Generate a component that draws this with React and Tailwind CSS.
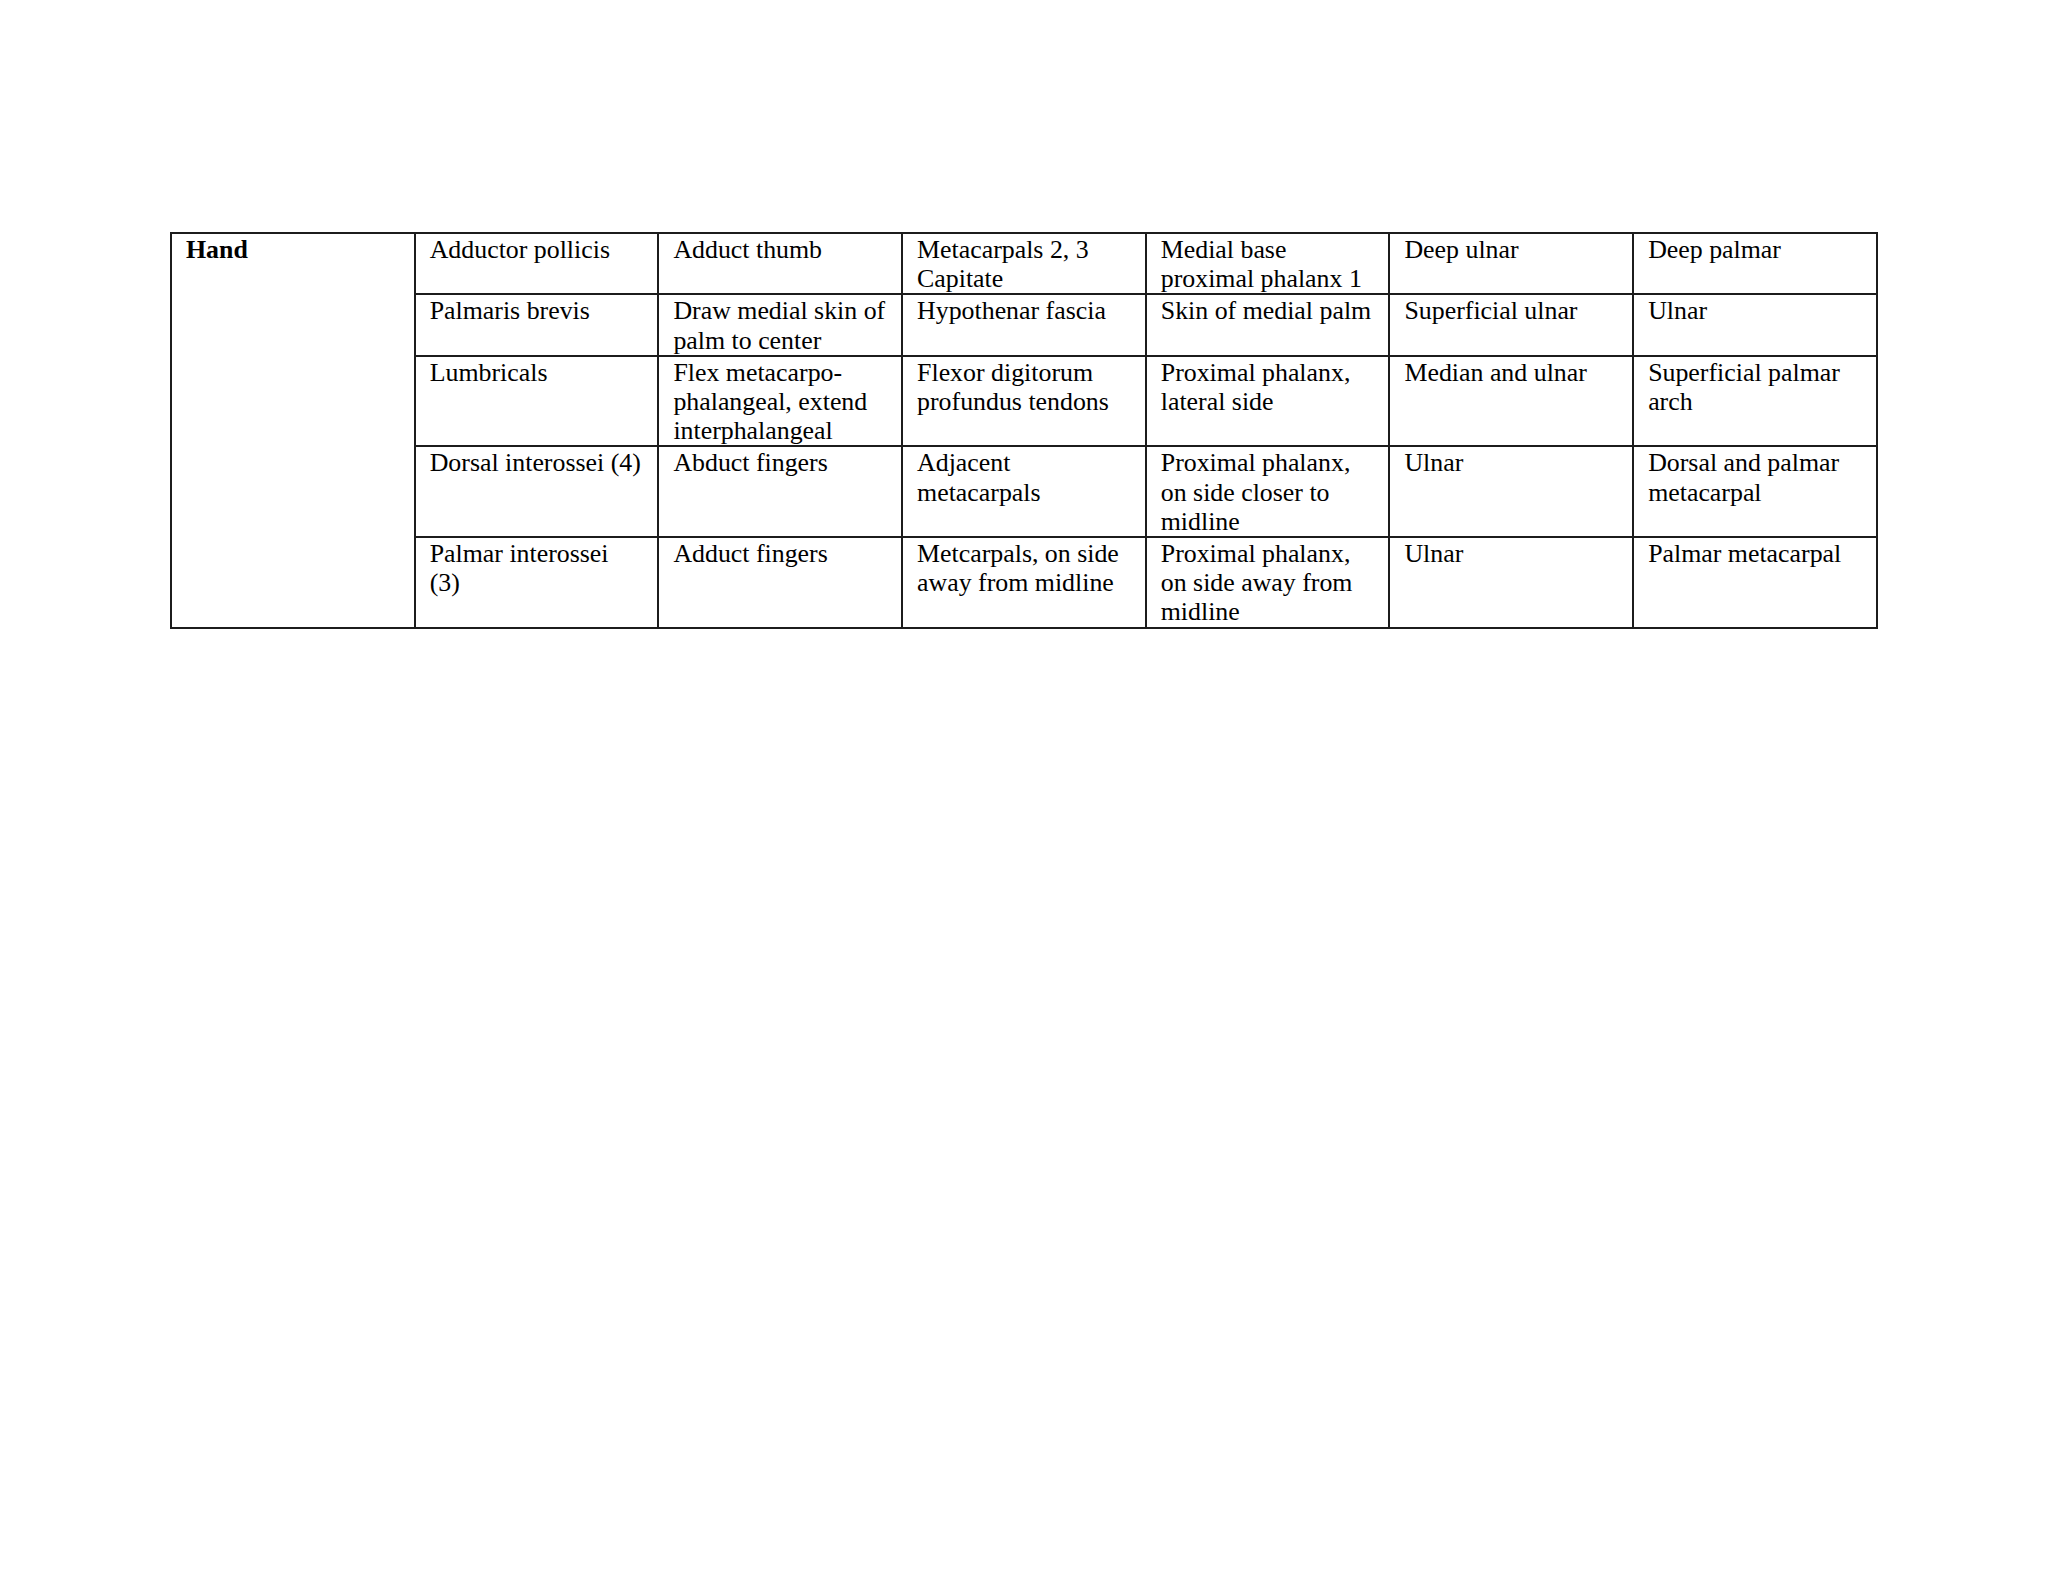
import React from "react";

const rows = [
  [
    ["Adductor pollicis"],
    ["Adduct thumb"],
    ["Metacarpals 2, 3", "Capitate"],
    ["Medial base", "proximal phalanx 1"],
    ["Deep ulnar"],
    ["Deep palmar"],
  ],
  [
    ["Palmaris brevis"],
    ["Draw medial skin of", "palm to center"],
    ["Hypothenar fascia"],
    ["Skin of medial palm"],
    ["Superficial ulnar"],
    ["Ulnar"],
  ],
  [
    ["Lumbricals"],
    ["Flex metacarpo-", "phalangeal, extend", "interphalangeal"],
    ["Flexor digitorum", "profundus tendons"],
    ["Proximal phalanx,", "lateral side"],
    ["Median and ulnar"],
    ["Superficial palmar", "arch"],
  ],
  [
    ["Dorsal interossei (4)"],
    ["Abduct fingers"],
    ["Adjacent", "metacarpals"],
    ["Proximal phalanx,", "on side closer to", "midline"],
    ["Ulnar"],
    ["Dorsal and palmar", "metacarpal"],
  ],
  [
    ["Palmar interossei", "(3)"],
    ["Adduct fingers"],
    ["Metcarpals, on side", "away from midline"],
    ["Proximal phalanx,", "on side away from", "midline"],
    ["Ulnar"],
    ["Palmar metacarpal"],
  ],
];

const cellCls =
  "border-2 border-[#1c1c1c] align-top pl-[14px] pr-[6px] pt-[1px] pb-0 text-left font-normal";

export default function App() {
  return (
    <div
      className="min-h-[1582px] w-[2048px] bg-white pt-[232px] pl-[170px] text-black"
      style={{ fontFamily: '"Liberation Serif", "Times New Roman", serif' }}
    >
      <table className="table-fixed border-collapse w-[1706px] text-[25.86px] leading-[29.2px]">
        <colgroup>
          {Array.from({ length: 7 }).map((_, i) => (
            <col key={i} className="w-[243.7px]" />
          ))}
        </colgroup>
        <tbody>
          {rows.map((row, ri) => (
            <tr key={ri}>
              {ri === 0 && (
                <td rowSpan={5} className={cellCls}>
                  <div className="whitespace-nowrap font-bold">Hand</div>
                </td>
              )}
              {row.map((lines, ci) => (
                <td key={ci} className={cellCls}>
                  {lines.map((l, li) => (
                    <div key={li} className="whitespace-nowrap">
                      {l}
                    </div>
                  ))}
                </td>
              ))}
            </tr>
          ))}
        </tbody>
      </table>
    </div>
  );
}
